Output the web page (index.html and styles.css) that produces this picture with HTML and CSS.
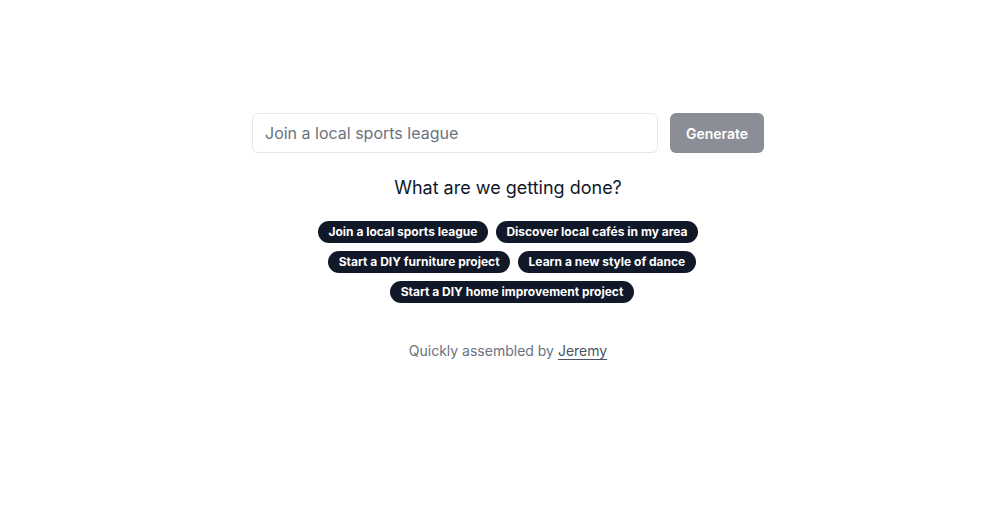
FILE: index.html
```html
<!DOCTYPE html>
<html lang="en">
<head>
<meta charset="utf-8">
<title>What are we getting done?</title>
<link rel="stylesheet" href="styles.css">
</head>
<body>
<main class="page">
  <form class="search">
    <input class="search-input" type="text" placeholder="Join a local sports league">
    <button class="search-btn" type="button">Generate</button>
  </form>
  <h1 class="title">What are we getting done?</h1>
  <div class="tags">
    <div class="tag-row">
      <span class="tag">Join a local sports league</span>
      <span class="tag">Discover local cafés in my area</span>
    </div>
    <div class="tag-row tag-row-shift">
      <span class="tag">Start a DIY furniture project</span>
      <span class="tag">Learn a new style of dance</span>
    </div>
    <div class="tag-row tag-row-shift">
      <span class="tag">Start a DIY home improvement project</span>
    </div>
  </div>
  <p class="footer">Quickly assembled by <a class="footer-link" href="#">Jeremy</a></p>
</main>
</body>
</html>
```
FILE: styles.css
```css
* { box-sizing: border-box; }
html, body { margin: 0; padding: 0; background: #fff; }
body {
  font-family: Inter, "Noto Sans", sans-serif;
  color: #111827;
}
.page {
  display: flex;
  flex-direction: column;
  align-items: center;
  padding: 113px 0 0 20px;
}
.search {
  display: flex;
  gap: 12px;
  width: 512px;
  margin: 0;
}
.search-input {
  flex: 1;
  height: 40px;
  border: 1px solid #e5e7eb;
  border-radius: 6px;
  padding: 0 12px;
  font-family: Inter, sans-serif;
  font-size: 16px;
  color: #111827;
  outline: none;
}
.search-input::placeholder { color: #6b7280; }
.search-btn {
  width: 94px;
  height: 40px;
  border: none;
  border-radius: 6px;
  background: #8b8e96;
  color: #fff;
  font-family: Inter, sans-serif;
  font-weight: 600;
  font-size: 14px;
}
.title {
  margin: 21px 0 0;
  font-size: 18px;
  font-weight: 400;
  line-height: 28px;
  color: #111827;
}
.tags {
  display: flex;
  flex-direction: column;
  align-items: center;
  gap: 8px;
  margin-top: 19px;
}
.tag-row {
  display: flex;
  justify-content: center;
  gap: 8px;
}
.tag-row-shift { padding-left: 8px; }
.tag {
  background: #111827;
  color: #fff;
  font-size: 12px;
  font-weight: 700;
  line-height: 22px;
  height: 22px;
  padding: 0 10.5px;
  border-radius: 11px;
}
.footer {
  margin: 38px 0 0;
  font-size: 14px;
  line-height: 20px;
  color: #6b7280;
}
.footer-link {
  color: #4b5563;
  text-decoration: underline;
  text-underline-offset: 3px;
}
```
